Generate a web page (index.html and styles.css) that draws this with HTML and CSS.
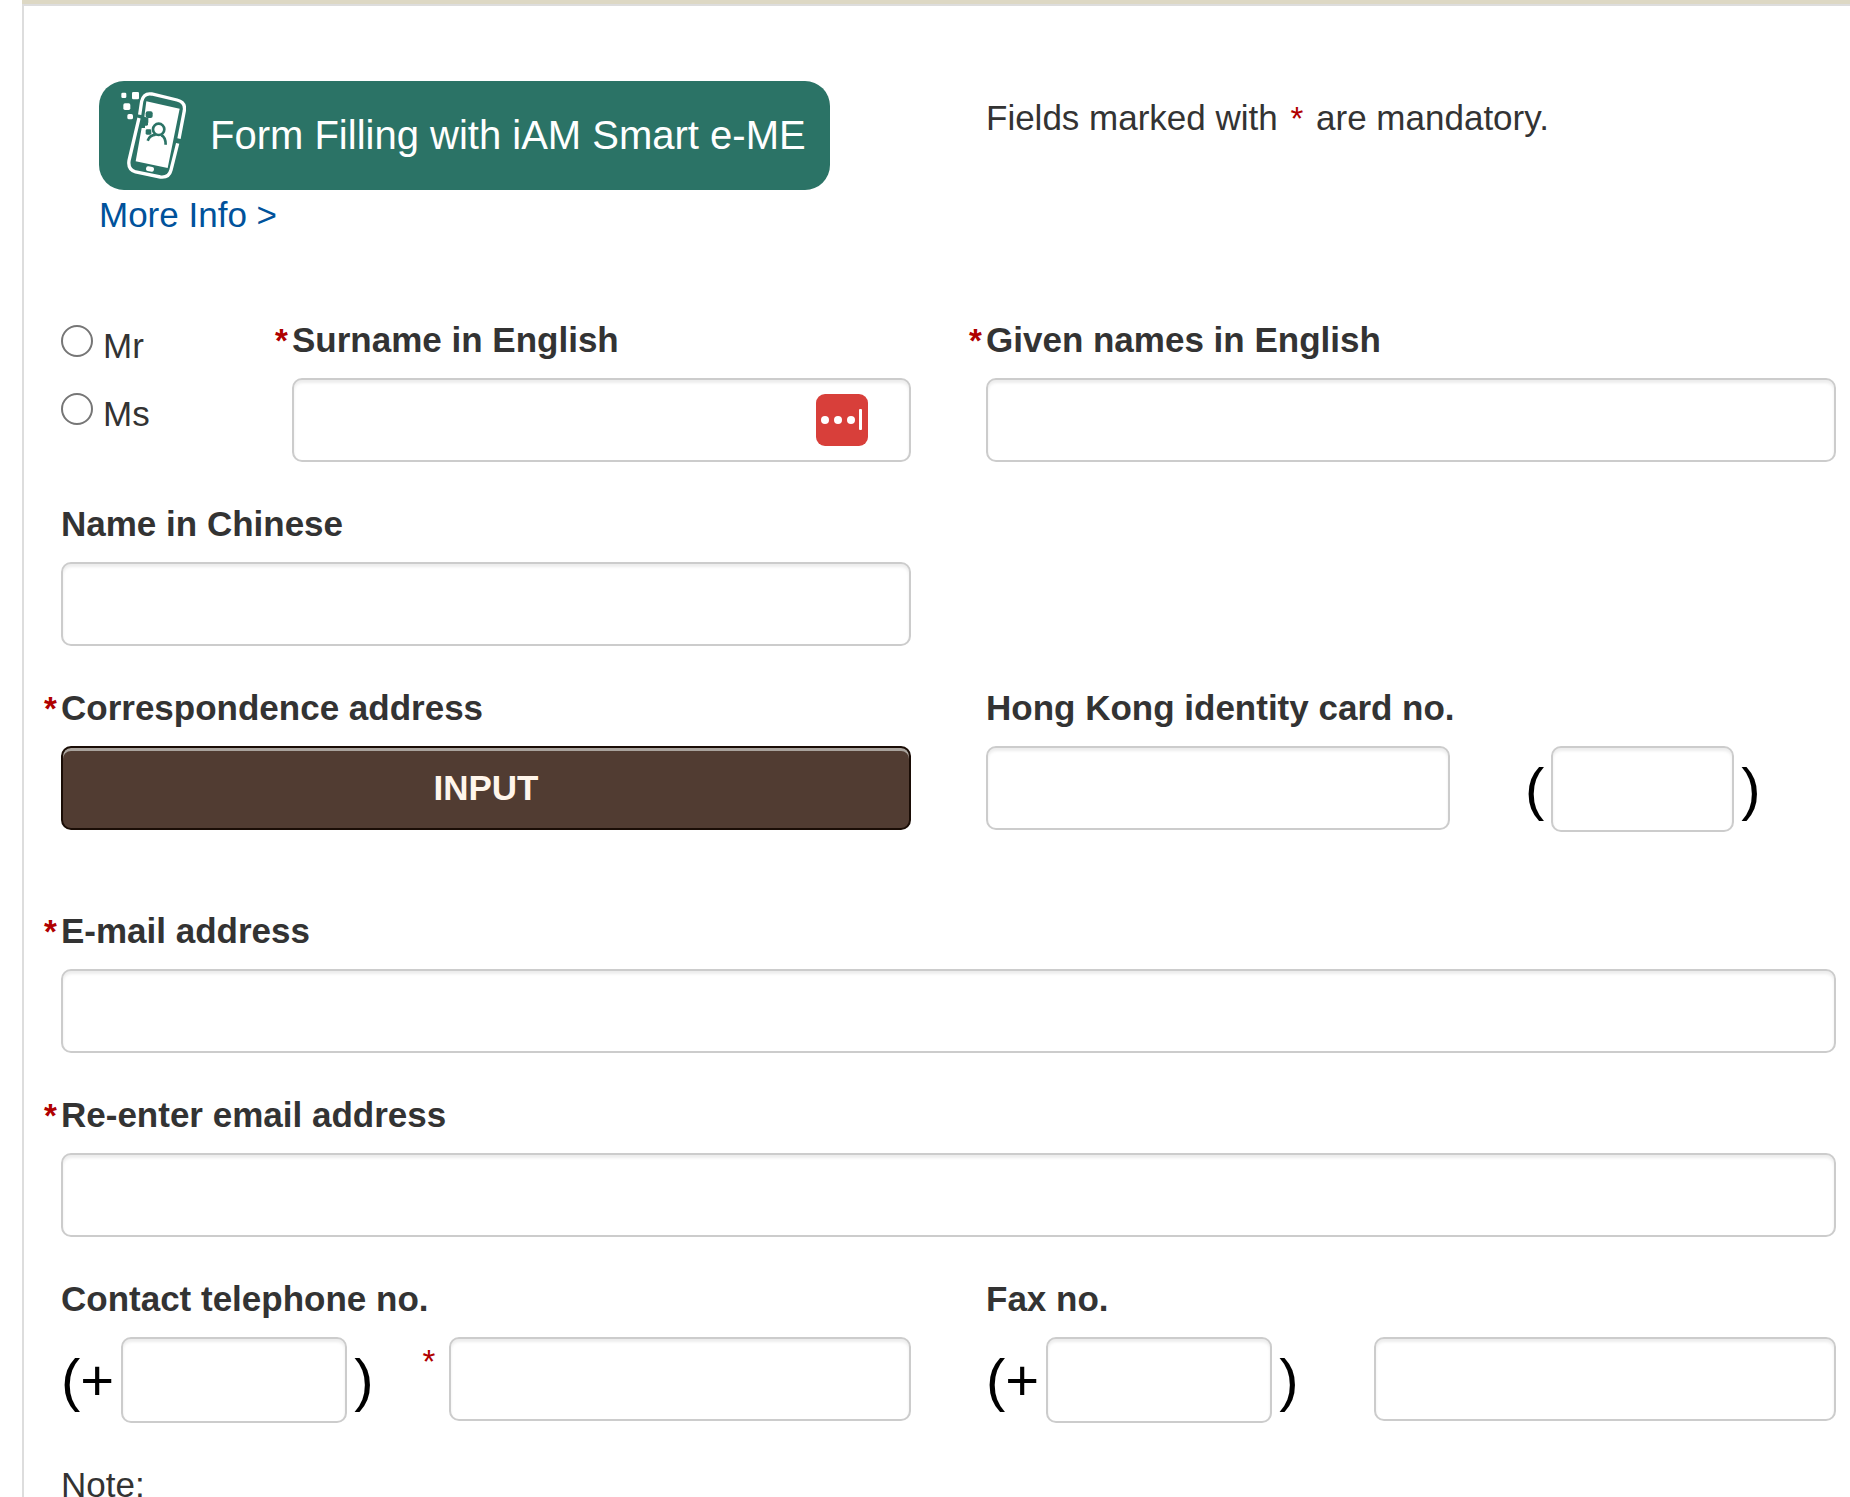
FILE: index.html
```html
<!DOCTYPE html>
<html lang="en">
<head>
	<meta charset="UTF-8">
	<title>Personal particulars</title>
	<link rel="stylesheet" href="styles.css">
</head>

<body>
<form class="panel">
	<div class="row intro">
		<div class="eme">
			<button type="button" class="eme-btn">
				<svg class="eme-icon" viewBox="0 0 195 261" aria-hidden="true">
					<g fill="#fff">
						<rect x="1" y="2" width="15" height="16" rx="4"/>
						<rect x="33" y="0" width="21" height="22" rx="4"/>
						<rect x="7" y="34" width="21" height="20" rx="5"/>
						<rect x="19" y="66" width="17" height="16" rx="5"/>
						<path d="M76 28L176 50L140 228L44 208L62 108L72 108L72 92L82 92L82 78L70 74Z"/>
						<rect x="75" y="224" width="24" height="14" rx="6" transform="rotate(10 87 231)"/>
					</g>
					<g fill="none" stroke="#fff" stroke-width="10">
						<path d="M56 68L62 28Q68 2 92 6L168 24Q194 30 190 56L174 140"/>
						<path d="M54 78L24 206Q20 232 44 240L118 255Q144 258 150 234L170 154"/>
					</g>
					<g fill="none" stroke="#2b7366" stroke-width="8">
						<circle cx="113" cy="112" r="17"/>
						<path d="M80 146Q86 130 104 128M121 130Q134 136 134 158"/>
					</g>
					<g fill="#2b7366">
						<rect x="74" y="58" width="21" height="20" rx="6"/>
						<rect x="64" y="88" width="17" height="13" rx="4"/>
						<rect x="74" y="112" width="17" height="16" rx="4"/>
					</g>
				</svg>
				Form Filling with iAM Smart e-ME
			</button>
			<a class="more" href="#">More Info &gt;</a>
		</div>
		<p class="mandatory">Fields marked with <span class="star">*</span> are mandatory.</p>
	</div>

	<div class="row">
		<div class="name">
			<div class="titles">
				<label class="radio"><input type="radio" name="title" value="Mr"><span>Mr</span></label>
				<label class="radio"><input type="radio" name="title" value="Ms"><span>Ms</span></label>
			</div>
			<div class="field">
				<label for="surname"><span class="star hang">*</span>Surname in English</label>
				<div class="with-icon">
					<input type="text" id="surname" name="surname">
					<svg class="filler" viewBox="0 0 52 52" aria-hidden="true">
						<rect width="52" height="52" rx="9" fill="#d83f3a"/>
						<g fill="#fff">
							<circle cx="9" cy="26" r="4"/>
							<circle cx="22" cy="26" r="4"/>
							<circle cx="35" cy="26" r="4"/>
							<rect x="43" y="15" width="3" height="21" rx="1"/>
						</g>
					</svg>
				</div>
			</div>
		</div>
		<div class="field">
			<label for="given"><span class="star hang">*</span>Given names in English</label>
			<input type="text" id="given" name="given">
		</div>
	</div>

	<div class="row">
		<div class="field">
			<label for="chinese">Name in Chinese</label>
			<input type="text" id="chinese" name="chinese">
		</div>
	</div>

	<div class="row address">
		<div class="field">
			<label for="address"><span class="star hang">*</span>Correspondence address</label>
			<button type="button" id="address" class="input-btn">INPUT</button>
		</div>
		<div class="field">
			<label for="hkid">Hong Kong identity card no.</label>
			<div class="split hkid">
				<input type="text" id="hkid" name="hkid">
				<div class="bracket check">
					<span>(</span><input type="text" name="hkidCheck" aria-label="Check digit"><span>)</span>
				</div>
			</div>
		</div>
	</div>

	<div class="row wide">
		<div class="field">
			<label for="email"><span class="star hang">*</span>E-mail address</label>
			<input type="email" id="email" name="email">
		</div>
	</div>

	<div class="row wide">
		<div class="field">
			<label for="email2"><span class="star hang">*</span>Re-enter email address</label>
			<input type="email" id="email2" name="email2">
		</div>
	</div>

	<div class="row">
		<div class="field">
			<label for="tel">Contact telephone no.</label>
			<div class="split phone">
				<div class="bracket">
					<span>(+</span><input type="tel" name="telCode" aria-label="Telephone country code"><span>)</span>
				</div>
				<div class="number">
					<span class="star">*</span>
					<input type="tel" id="tel" name="tel">
				</div>
			</div>
		</div>
		<div class="field">
			<label for="fax">Fax no.</label>
			<div class="split phone">
				<div class="bracket">
					<span>(+</span><input type="tel" name="faxCode" aria-label="Fax country code"><span>)</span>
				</div>
				<input type="tel" id="fax" name="fax">
			</div>
		</div>
	</div>

	<p class="note">Note:</p>
</form>
</body>
</html>
```

FILE: styles.css
```css
* {
	box-sizing: border-box;
}
body {
	margin: 0;
	background-color: #fff;
	color: #333;
	font-family: "Liberation Sans", Arial, sans-serif;
	font-size: 35px;
	line-height: 50px;
	overflow: hidden;
}
p {
	margin: 0;
}
.panel {
	margin-left: 22px;
	padding: 75px 14px 0 37px;
	border-left: 2px solid #ddd;
	border-top: 2px solid #ddd;
	box-shadow: 0 -4px #ddd8c4;
	margin-top: 4px;
}
.row {
	display: grid;
	grid-template-columns: 1fr 1fr;
	column-gap: 75px;
	margin-bottom: 37px;
}
.wide {
	grid-template-columns: 1fr;
}
.address {
	margin-bottom: 74px;
}

/* top of the form */
.intro {
	margin-bottom: 75px;
}
.eme {
	padding-left: 38px;
}
.eme-btn {
	display: flex;
	align-items: center;
	gap: 24px;
	height: 109px;
	padding: 0 24px 0 22px;
	border: 0;
	border-radius: 25px;
	background-color: #2b7366;
	color: #fff;
	font-family: inherit;
	font-size: 40px;
	white-space: nowrap;
}
.eme-icon {
	width: 65px;
	height: 87px;
}
.more {
	display: block;
	color: #00529b;
	text-decoration: none;
}
.mandatory {
	padding-top: 12px;
}
.mandatory .star {
	padding: 0 3px;
}

/* fields */
.field {
	display: flex;
	flex-direction: column;
	gap: 13px;
}
.field label {
	font-weight: bold;
}
.star {
	color: #b00000;
	font-size: 33px;
}
.hang {
	display: inline-block;
	width: 17px;
	margin-left: -17px;
	line-height: 40px;
}
input[type="text"],
input[type="email"],
input[type="tel"] {
	width: 100%;
	min-width: 0;
	height: 84px;
	padding: 0 15px;
	border: 2px solid #ccc;
	border-radius: 10px;
	background-color: #fff;
	box-shadow: inset 0 3px 3px rgba(0, 0, 0, 0.075);
	font: inherit;
}
.name {
	display: grid;
	grid-template-columns: 156fr 619fr;
	column-gap: 75px;
}
.titles {
	display: flex;
	flex-direction: column;
	gap: 18px;
	padding-top: 6px;
}
.radio {
	display: flex;
	gap: 10px;
}
.radio input {
	appearance: none;
	width: 32px;
	height: 32px;
	margin: 4px 0 0;
	border: 2px solid #767676;
	border-radius: 50%;
}
.radio input:checked {
	background: radial-gradient(#0075ff 50%, #fff 55%);
}
.with-icon {
	position: relative;
	display: flex;
}
.filler {
	position: absolute;
	top: 16px;
	right: 43px;
	width: 52px;
	height: 52px;
}
.input-btn {
	height: 84px;
	border: 2px solid #1a0d06;
	border-radius: 10px;
	background-color: #513c32;
	box-shadow: inset 0 3px #a9a39d;
	color: #fff5eb;
	font: inherit;
	font-weight: bold;
}
.split {
	display: grid;
	column-gap: 75px;
}
.hkid {
	grid-template-columns: 464fr 311fr;
}
.phone {
	grid-template-columns: 311fr 464fr;
}
.bracket {
	display: flex;
	align-items: center;
	gap: 7px;
	color: #000;
	font-size: 58px;
}
.bracket input[type="tel"] {
	width: 226px;
	height: 86px;
}
.bracket input[type="text"] {
	width: 183px;
	height: 86px;
}
.number {
	position: relative;
}
.number .star {
	position: absolute;
	left: -26px;
}
```
